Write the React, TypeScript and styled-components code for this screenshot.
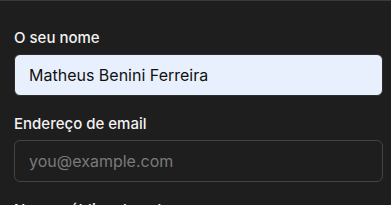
import React from "react";
import styled, { createGlobalStyle } from "styled-components";

const GlobalStyle = createGlobalStyle`
  html, body {
    margin: 0;
    padding: 0;
    background: #1e1e1e;
  }
  body {
    font-family: Inter, "Noto Sans", sans-serif;
  }
`;

const Panel = styled.form`
  box-sizing: border-box;
  width: 391px;
  height: 205px;
  overflow: hidden;
  background: #1e1e1e;
  border-top: 1px solid #3a3a3a;
  padding: 28px 8px 0 14px;
  display: flex;
  flex-direction: column;
  gap: 19px;
`;

const Field = styled.div`
  display: flex;
  flex-direction: column;
  gap: 7px;
`;

const Label = styled.label`
  color: #f2f2f2;
  font-size: 15px;
  font-weight: 500;
  line-height: 18px;
`;

const Input = styled.input<{ filled?: boolean }>`
  box-sizing: border-box;
  width: 100%;
  height: 42px;
  padding: 0 14px;
  border-radius: 6px;
  font-family: Inter, "Noto Sans", sans-serif;
  font-size: 16px;
  outline: none;
  border: 1px solid ${({ filled }) => (filled ? "#2c2c2c" : "#444444")};
  background: ${({ filled }) => (filled ? "#e8f0fe" : "transparent")};
  color: ${({ filled }) => (filled ? "#111111" : "#e8e8e8")};
  &::placeholder {
    color: #7a7a7a;
  }
`;

export default function App() {
  return (
    <>
      <GlobalStyle />
      <Panel>
        <Field>
          <Label>O seu nome</Label>
          <Input filled defaultValue="Matheus Benini Ferreira" />
        </Field>
        <Field>
          <Label>Endereço de email</Label>
          <Input placeholder="you@example.com" />
        </Field>
        <Field>
          <Label>Nome público do autor</Label>
          <Input />
        </Field>
      </Panel>
    </>
  );
}
